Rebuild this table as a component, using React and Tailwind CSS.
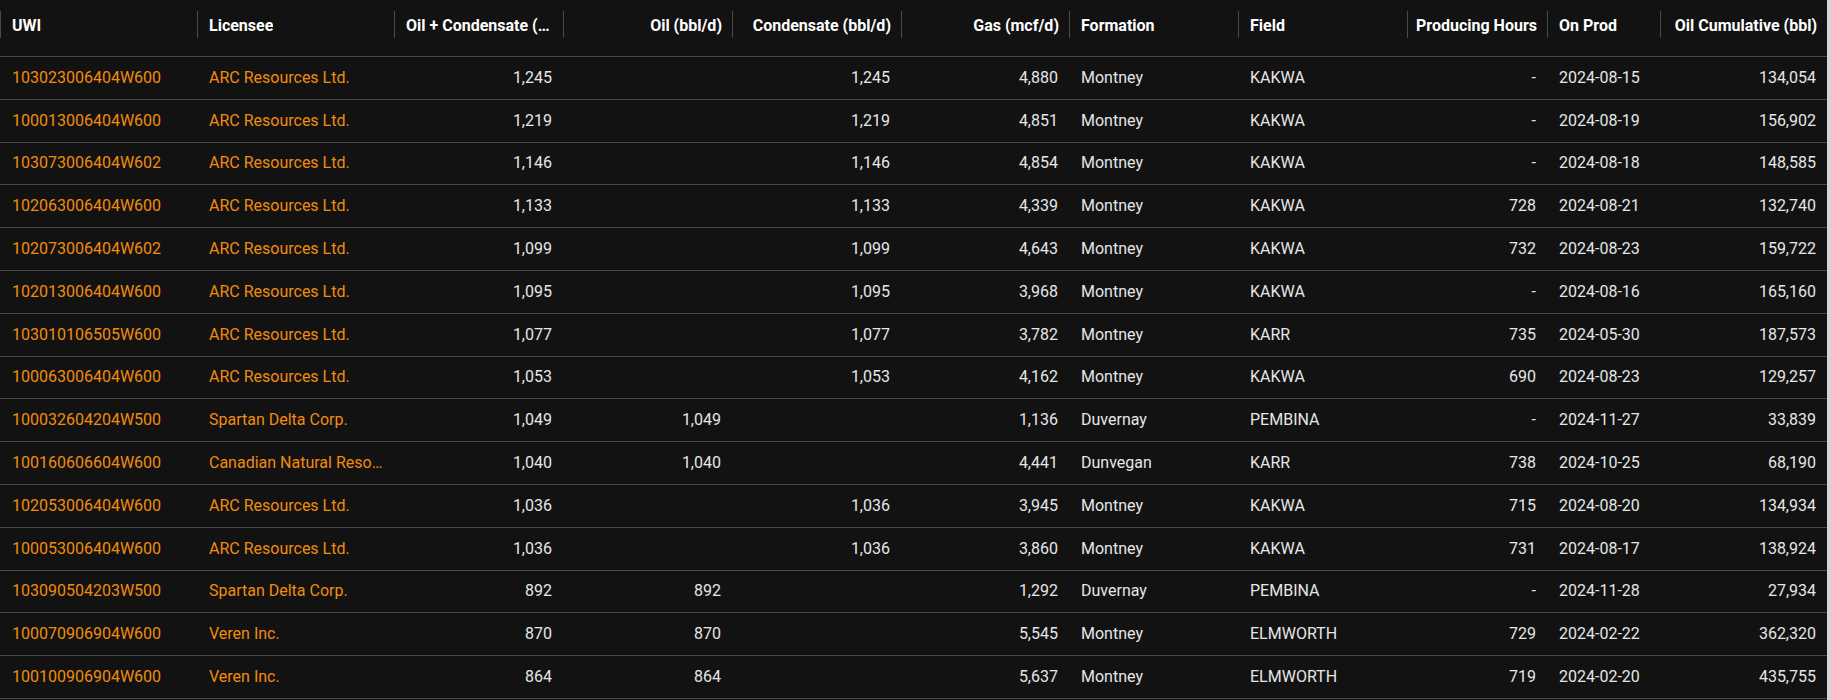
import React from "react";

const columns = [
  { key: "uwi", label: "UWI", w: "w-[197px]" },
  { key: "lic", label: "Licensee", w: "w-[197px]" },
  { key: "oc", label: "Oil + Condensate (bbl/d)", w: "w-[169px]", right: true, headLeft: true },
  { key: "oil", label: "Oil (bbl/d)", w: "w-[169px]", right: true },
  { key: "cond", label: "Condensate (bbl/d)", w: "w-[169px]", right: true },
  { key: "gas", label: "Gas (mcf/d)", w: "w-[168px]", right: true },
  { key: "form", label: "Formation", w: "w-[169px]" },
  { key: "field", label: "Field", w: "w-[169px]" },
  { key: "hrs", label: "Producing Hours", w: "w-[140px]", right: true },
  { key: "onprod", label: "On Prod", w: "w-[113px]" },
  { key: "cum", label: "Oil Cumulative (bbl)", w: "w-[167px]", right: true },
];

const ARC = "ARC Resources Ltd.";

const rows = [
  ["103023006404W600", ARC, "1,245", "", "1,245", "4,880", "Montney", "KAKWA", "-", "2024-08-15", "134,054"],
  ["100013006404W600", ARC, "1,219", "", "1,219", "4,851", "Montney", "KAKWA", "-", "2024-08-19", "156,902"],
  ["103073006404W602", ARC, "1,146", "", "1,146", "4,854", "Montney", "KAKWA", "-", "2024-08-18", "148,585"],
  ["102063006404W600", ARC, "1,133", "", "1,133", "4,339", "Montney", "KAKWA", "728", "2024-08-21", "132,740"],
  ["102073006404W602", ARC, "1,099", "", "1,099", "4,643", "Montney", "KAKWA", "732", "2024-08-23", "159,722"],
  ["102013006404W600", ARC, "1,095", "", "1,095", "3,968", "Montney", "KAKWA", "-", "2024-08-16", "165,160"],
  ["103010106505W600", ARC, "1,077", "", "1,077", "3,782", "Montney", "KARR", "735", "2024-05-30", "187,573"],
  ["100063006404W600", ARC, "1,053", "", "1,053", "4,162", "Montney", "KAKWA", "690", "2024-08-23", "129,257"],
  ["100032604204W500", "Spartan Delta Corp.", "1,049", "1,049", "", "1,136", "Duvernay", "PEMBINA", "-", "2024-11-27", "33,839"],
  ["100160606604W600", "Canadian Natural Resources Limited", "1,040", "1,040", "", "4,441", "Dunvegan", "KARR", "738", "2024-10-25", "68,190"],
  ["102053006404W600", ARC, "1,036", "", "1,036", "3,945", "Montney", "KAKWA", "715", "2024-08-20", "134,934"],
  ["100053006404W600", ARC, "1,036", "", "1,036", "3,860", "Montney", "KAKWA", "731", "2024-08-17", "138,924"],
  ["103090504203W500", "Spartan Delta Corp.", "892", "892", "", "1,292", "Duvernay", "PEMBINA", "-", "2024-11-28", "27,934"],
  ["100070906904W600", "Veren Inc.", "870", "870", "", "5,545", "Montney", "ELMWORTH", "729", "2024-02-22", "362,320"],
  ["100100906904W600", "Veren Inc.", "864", "864", "", "5,637", "Montney", "ELMWORTH", "719", "2024-02-20", "435,755"],
];

export default function App() {
  return (
    <div className="flex h-[700px] w-[1831px] overflow-hidden bg-[#121212] font-['Roboto',sans-serif]">
      <div className="w-[1827px] shrink-0">
        {/* header */}
        <div className="flex h-[57px] border-b border-[#4a4a4a]">
          {columns.map((c) => (
            <div key={c.key} className={`${c.w} shrink-0 pt-[11px]`}>
              <div
                className={`flex h-[27px] items-center border-l border-[#4a4a4a] pt-[3px] ${
                  c.right && !c.headLeft ? "justify-end pl-[7px] pr-[10px]" : "pl-[11px] pr-[8px]"
                }`}
              >
                <span className="truncate text-[16px] font-bold text-white">{c.label}</span>
              </div>
            </div>
          ))}
        </div>

        {/* rows */}
        {rows.map((r, i) => (
          <div key={i} className="flex h-[42.8px] items-center border-b border-[#4a4a4a]">
            {columns.map((c, j) => (
              <div
                key={c.key}
                className={`${c.w} shrink-0 truncate text-[16px] ${c.right ? "pl-3 pr-[11px] text-right" : "pl-3 pr-2"} ${
                  j < 2 ? "text-[#f08c0c]" : "text-[#e6e6e6]"
                }`}
              >
                {r[j]}
              </div>
            ))}
          </div>
        ))}
      </div>
      <div className="h-full w-[4px] bg-[#d6d6d6]" />
    </div>
  );
}
